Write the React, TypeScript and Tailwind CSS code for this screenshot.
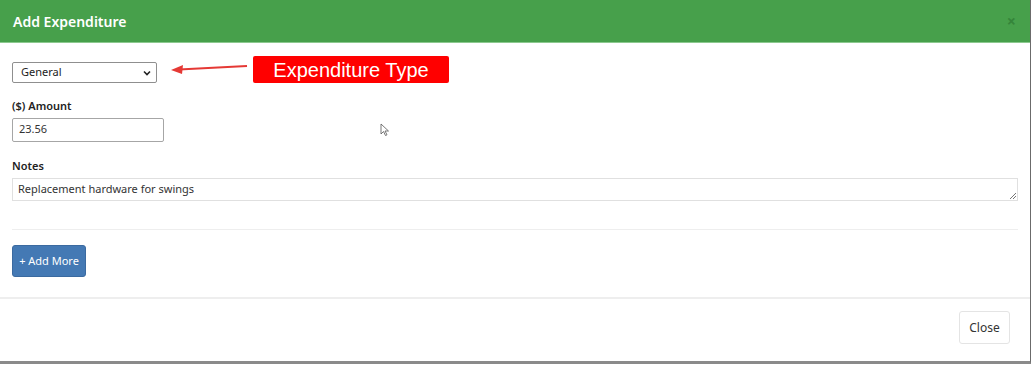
import React from "react";

const font = { fontFamily: '"Noto Sans", "Open Sans", sans-serif' };

const App = () => {
  return (
    <div className="w-[1032px] h-[366px] bg-white overflow-hidden" style={font}>
      <div className="relative w-[1031px] h-[364px] border-r border-b-[3px] border-r-[#6b6b6b] border-b-[#8a8a8a] flex flex-col">
        {/* Header */}
        <div className="h-[43px] bg-[#47a04b] border-b border-[#8cc98f] flex items-center justify-between px-[13px] shrink-0">
          <h4 className="text-white text-[14px] font-semibold">Add Expenditure</h4>
          <span className="text-[#35853a] text-[16px] font-bold leading-none mr-[1px]">×</span>
        </div>

        {/* Body */}
        <div className="px-[12px] pt-[19px] flex flex-col">
          <div className="flex items-center">
            <div className="w-[145px] h-[21px] border border-[#8f8f8f] rounded-[2px] flex items-center justify-between pl-[8px] pr-[4px] text-[11px] text-[#222]">
              <span>General</span>
              <svg width="10" height="10" viewBox="0 0 10 10">
                <path d="M2 3.5 L5 6.5 L8 3.5" fill="none" stroke="#222" strokeWidth="1.6" />
              </svg>
            </div>
            <svg width="80" height="14" viewBox="0 0 80 14" className="ml-[12px] -mt-[8px]">
              <path d="M78 4 L10 7.5" stroke="#e53935" strokeWidth="2" fill="none" />
              <path d="M2 8 L14 3 L13 12 Z" fill="#e53935" />
            </svg>
            <div className="ml-[4px] -mt-[6px] h-[27px] w-[196px] bg-[#ff0000] rounded-[2px] flex items-center justify-center text-white text-[20px]" style={{ fontFamily: '"Liberation Sans", Arial, sans-serif' }}>
              Expenditure Type
            </div>
          </div>

          <label className="mt-[15px] text-[11px] font-semibold text-[#222]">($) Amount</label>
          <div className="mt-[3px] w-[152px] h-[24px] border border-[#a6a6a6] rounded-[2px] flex items-center px-[6px] text-[11px] text-[#333]">
            23.56
          </div>

          <label className="mt-[16px] text-[11px] font-semibold text-[#222]">Notes</label>
          <div className="relative mt-[4px] h-[23px] border border-[#e0e0e0] flex items-center px-[5px] text-[11px] text-[#333]">
            Replacement hardware for swings
            <svg width="6" height="6" viewBox="0 0 6 6" className="absolute right-[1px] bottom-[1px]">
              <path d="M0 6 L6 0 M3 6 L6 3" stroke="#777" strokeWidth="1" />
            </svg>
          </div>

          <div className="mt-[28px] h-px bg-[#eeeeee]" />

          <button className="mt-[15px] w-[74px] h-[32px] bg-[#4479b4] border border-[#3b6aa0] rounded-[3px] text-white text-[11px]">
            + Add More
          </button>
        </div>

        {/* Footer */}
        <div className="mt-[20px] border-t-[2px] border-[#eeeeee] flex justify-end pr-[20px] pt-[12px]">
          <button className="w-[51px] h-[33px] border border-[#e4e4e4] rounded-[3px] bg-white text-[12px] text-[#333]">
            Close
          </button>
        </div>

        {/* mouse pointer */}
        <svg width="10" height="14" viewBox="0 0 10 14" className="absolute left-[380px] top-[123px]">
          <path d="M1 1 L1 11 L3.5 8.5 L5.5 12.5 L7 11.8 L5 8 L8.5 8 Z" fill="white" stroke="#555" strokeWidth="0.8" />
        </svg>
      </div>
    </div>
  );
};

export default App;
